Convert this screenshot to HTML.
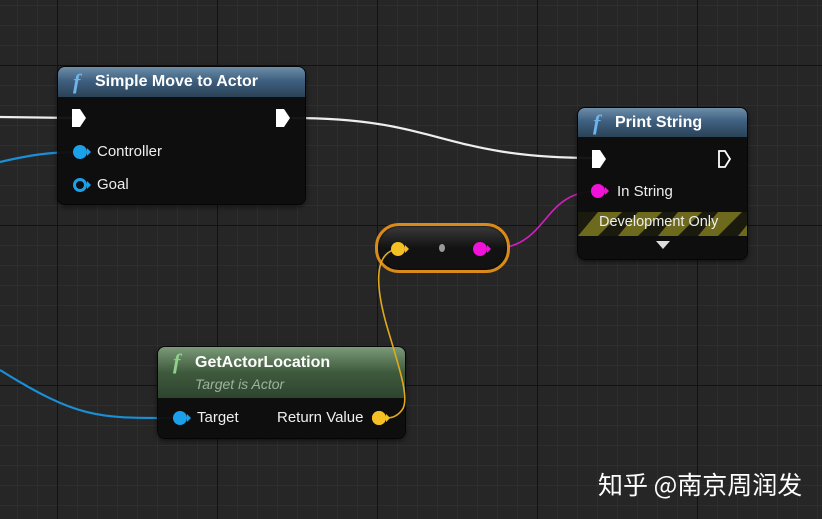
<!DOCTYPE html>
<html><head><meta charset="utf-8"><style>
body{margin:0;width:822px;height:519px;overflow:hidden;background:#262626;font-family:"Liberation Sans","Noto Sans CJK SC",sans-serif;position:relative}
.node{position:absolute;background:rgba(14,14,14,0.96);border-radius:7px;box-shadow:0 0 0 1px #050505,0 2px 6px rgba(0,0,0,.7);overflow:hidden}
.hdr{position:absolute;left:0;right:0;top:0;color:#fff;font-weight:bold;font-size:16px}
.blue{background:linear-gradient(#6d8ea9,#3f6080 45%,#2a4256);height:30px}
.t{position:absolute;color:#eee;font-size:15px}
.f{font-family:"Liberation Serif",serif;font-style:italic;color:#6fb4ea;font-size:22px;position:absolute}
svg{position:absolute;left:0;top:0}
</style></head><body>
<svg width="822" height="519">
<defs>
<pattern id="mn" width="20" height="20" patternUnits="userSpaceOnUse" x="17" y="5"><path d="M0 0H20M0 0V20" stroke="#343434" stroke-width="1.2" fill="none"/></pattern>
<pattern id="mj" width="160" height="160" patternUnits="userSpaceOnUse" x="57" y="65"><path d="M0 0H160M0 0V160" stroke="#121212" stroke-width="2" fill="none"/></pattern>
</defs>
<rect width="822" height="519" fill="#262626"/>
<rect width="822" height="519" fill="url(#mn)"/>
<rect width="822" height="519" fill="url(#mj)"/>
<g fill="none" stroke-width="2.2">
<path d="M0 117 L75 118" stroke="#eee"/>
<path d="M292 118 C440 118 440 158 595 158" stroke="#eee"/>
<path d="M0 162 C30 155 50 152 78 152" stroke="#1a8fd6"/>
<path d="M0 370 C80 420 100 418 178 418" stroke="#1a8fd6"/>
<path d="M490 249 C550 249 540 191 598 191" stroke="#d41ec0" stroke-width="1.6"/>
</g>
</svg>

<div class="node" style="left:58px;top:67px;width:247px;height:137px">
<div class="hdr blue"><span class="f" style="left:15px;top:2px">f</span><span style="position:absolute;left:37px;top:6px">Simple Move to Actor</span></div>
<svg width="247" height="137"><path d="M14 42h8l6 9-6 9h-8z" fill="#fff"/><path d="M218 42h8l6 9-6 9h-8z" fill="#fff"/>
<circle cx="22" cy="85" r="7" fill="#1ba0ea"/><path d="M29 81l4 4-4 4z" fill="#1ba0ea"/>
<circle cx="22" cy="118" r="5.5" fill="none" stroke="#1ba0ea" stroke-width="3"/><path d="M29 114l4 4-4 4z" fill="#1ba0ea"/></svg>
<span class="t" style="left:39px;top:76px">Controller</span>
<span class="t" style="left:39px;top:109px">Goal</span>
</div>

<div class="node" style="left:578px;top:108px;width:169px;height:151px">
<div class="hdr blue" style="height:29px"><span class="f" style="left:15px;top:2px">f</span><span style="position:absolute;left:37px;top:6px">Print String</span></div>
<svg width="169" height="151"><path d="M14 42h8l6 9-6 9h-8z" fill="#fff"/><path d="M141 43h6l5 8-5 8h-6z" fill="none" stroke="#fff" stroke-width="1.8"/>
<circle cx="20" cy="83" r="7" fill="#f012d8"/><path d="M27 79l4 4-4 4z" fill="#f012d8"/>
<rect x="0" y="104" width="169" height="24" fill="#1a1a0e"/>
<g fill="#6d6a1e"><path d="M0 128L20 104h24L20 128z"/><path d="M40 128L60 104h24L60 128z"/><path d="M80 128L100 104h24L100 128z"/><path d="M120 128L140 104h24L140 128z"/><path d="M160 128L169 117v11z"/></g>
<path d="M78 133h14l-7 8z" fill="#ddd"/></svg>
<span class="t" style="left:21px;top:106px;font-size:14.5px">Development Only</span>
<span class="t" style="left:39px;top:75px">In String</span>
</div>

<div style="position:absolute;left:375px;top:223px;width:129px;height:44px;border:3px solid #d98a18;border-radius:24px;background:linear-gradient(#3a3a3a,#121212 50%);box-shadow:0 0 2px #000 inset"></div>

<div class="node" style="left:158px;top:347px;width:247px;height:91px">
<div class="hdr" style="height:51px;background:linear-gradient(#7a9a78,#3e5a3c 50%,#2e4430)"><span class="f" style="left:15px;top:2px;color:#8fd08a">f</span><span style="position:absolute;left:37px;top:7px">GetActorLocation</span>
<span style="position:absolute;left:37px;top:29px;font-weight:normal;font-style:italic;font-size:14px;color:#9fb39b">Target is Actor</span></div>
<svg width="247" height="91"><circle cx="22" cy="71" r="7" fill="#1ba0ea"/><path d="M29 67l4 4-4 4z" fill="#1ba0ea"/>
<circle cx="221" cy="71" r="7" fill="#f4c024"/><path d="M228 67l4 4-4 4z" fill="#f4c024"/></svg>
<span class="t" style="left:39px;top:62px">Target</span>
<span class="t" style="left:119px;top:62px">Return Value</span>
</div>

<svg width="822" height="519" style="pointer-events:none">
<path d="M398 249 C372 252 376 290 388 330 C400 370 410 400 402 410 C396 418 390 418 384 418" fill="none" stroke="#e0a81e" stroke-width="1.6"/>
<circle cx="398" cy="249" r="7" fill="#f4c024"/><path d="M405 245l4 4-4 4z" fill="#f4c024"/>
<ellipse cx="442" cy="248" rx="3" ry="4" fill="#999"/>
<circle cx="480" cy="249" r="7" fill="#f012d8"/><path d="M487 245l4 4-4 4z" fill="#f012d8"/>
<circle cx="379" cy="418" r="7" fill="#f4c024"/><path d="M386 414l4 4-4 4z" fill="#f4c024"/>
</svg>

<div style="position:absolute;left:598px;top:466px;color:#fff;font-size:25px;font-family:'Noto Sans CJK SC',sans-serif">知乎 @南京周润发</div>
</body></html>
